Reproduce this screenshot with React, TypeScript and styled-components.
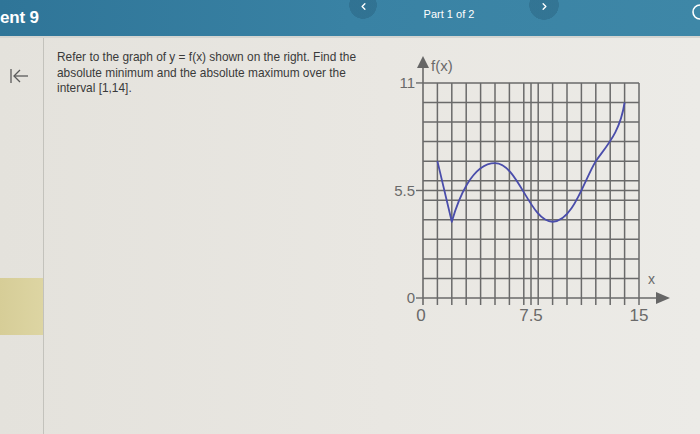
import React from "react";
import styled, { createGlobalStyle } from "styled-components";
import { ChevronLeft, ChevronRight } from "lucide-react";

const GlobalStyle = createGlobalStyle`
  html, body {
    margin: 0;
    padding: 0;
    width: 700px;
    height: 434px;
    overflow: hidden;
    background: #e7e5e0;
    font-family: "Liberation Sans", Arial, sans-serif;
  }
`;

const Page = styled.div`
  width: 700px;
  height: 434px;
  display: flex;
  flex-direction: column;
  overflow: hidden;
  background: linear-gradient(90deg, #e4e2dc 0%, #e9e7e2 55%, #ecebe7 100%);
`;

const HeaderBar = styled.header`
  height: 36px;
  flex: none;
  display: flex;
  align-items: flex-start;
  overflow: hidden;
  background: linear-gradient(90deg, #2f7598 0%, #3982a4 50%, #3e87a7 100%);
  border-bottom: 2px solid #d4d5d1;
  color: #ffffff;
`;

const CourseTitle = styled.div`
  width: 349px;
  flex: none;
  padding-top: 8px;
  font-size: 17px;
  font-weight: 700;
  letter-spacing: -0.2px;
`;

const Nav = styled.nav`
  display: flex;
  align-items: flex-start;
  flex: none;
`;

// the round buttons sit partly above the top edge, so only their lower part is drawn
const NavButton = styled.div<{ $size: number }>`
  width: ${(p) => p.$size}px;
  height: 20px;
  background: radial-gradient(
    circle ${(p) => p.$size / 2}px at 50% 5px,
    rgba(20, 60, 85, 0.22) 97%,
    transparent 100%
  );
  display: flex;
  justify-content: center;
  padding-top: 1px;
  box-sizing: border-box;
  color: #ffffff;
`;

const PartBlock = styled.div`
  width: 152px;
  padding-top: 8px;
  text-align: center;
  font-size: 11px;
  padding-right: 8px;
  box-sizing: border-box;
`;

const HeaderRight = styled.div`
  flex: 1;
  display: flex;
  justify-content: flex-end;
  padding-top: 2px;
`;

const Body = styled.div`
  flex: 1;
  display: flex;
`;

const Sidebar = styled.aside`
  width: 43px;
  flex: none;
  display: flex;
  flex-direction: column;
  border-right: 1px solid #c3c2bc;
  padding-top: 30px;
  box-sizing: content-box;
`;

const BackIcon = styled.svg`
  margin-left: 9px;
  flex: none;
`;

const FlagBlock = styled.div`
  margin-top: 194px;
  height: 57px;
  background: linear-gradient(90deg, #d6cd97, #ddd5a3);
`;

const Content = styled.main`
  flex: 1;
  display: flex;
  padding: 12px 0 0 13px;
  align-items: flex-start;
`;

const Question = styled.p`
  width: 306px;
  margin: 0;
  font-size: 11.9px;
  line-height: 15.5px;
  color: #3a3a3a;
`;

const GraphBox = styled.div`
  margin-left: 17px;
`;

const Graph = () => {
  const ox = 43;
  const oy = 248;
  const ux = 14.4;
  const uy = 19.55;
  const px = (x: number) => ox + ux * x;
  const py = (y: number) => oy - uy * y;
  const vLines = [...Array.from({ length: 15 }, (_, i) => i + 1), 7.5];
  const hLines = [...Array.from({ length: 11 }, (_, i) => i + 1), 5.5];
  const grid = "#6a6a6a";
  return (
    <svg width="300" height="290" viewBox="0 0 300 290">
      {vLines.map((x) => (
        <line key={"v" + x} x1={px(x)} x2={px(x)} y1={py(11)} y2={oy + 7} stroke={grid} strokeWidth={1.5} />
      ))}
      {hLines.map((y) => (
        <line key={"h" + y} x1={ox} x2={px(15)} y1={py(y)} y2={py(y)} stroke={grid} strokeWidth={1.5} />
      ))}
      {[0, 5.5, 11].map((y) => (
        <line key={"t" + y} x1={ox - 7} x2={ox} y1={py(y)} y2={py(y)} stroke={grid} strokeWidth={1.4} />
      ))}
      <line x1={ox} x2={ox} y1={oy + 7} y2={14} stroke={grid} strokeWidth={1.6} />
      <polygon points={`${ox - 6},18 ${ox},6 ${ox + 6},18`} fill="#666" />
      <line x1={ox} x2={280} y1={oy} y2={oy} stroke={grid} strokeWidth={1.6} />
      <polygon points={`276,242 290,248 276,254`} fill="#666" />
      <g fill="#6a6a6a" fontFamily="Liberation Sans, Arial, sans-serif">
        <text x={ox - 8} y={py(11) + 5} fontSize="15" textAnchor="end">11</text>
        <text x={ox - 8} y={py(5.5) + 6} fontSize="15" textAnchor="end">5.5</text>
        <text x={ox - 8} y={oy + 5} fontSize="15" textAnchor="end">0</text>
        <text x={px(0) - 2} y={oy + 23} fontSize="17" textAnchor="middle">0</text>
        <text x={px(7.5)} y={oy + 23} fontSize="17" textAnchor="middle">7.5</text>
        <text x={px(15)} y={oy + 23} fontSize="17" textAnchor="middle">15</text>
        <text x={ox + 8} y={21} fontSize="15">f(x)</text>
        <text x={268} y={234} fontSize="14">x</text>
      </g>
      <path
        d={`M${px(1)},${py(7)} L${px(2)},${py(3.9)}
          C78,150 92,${py(6.9)} ${px(5)},${py(6.9)}
          C138,${py(6.9)} 150,${py(3.9)} ${px(9)},${py(3.9)}
          C193,${py(3.9)} 205,128 ${px(12)},${py(7)}
          C228,94 240,82 ${px(14)},${py(10)}`}
        fill="none"
        stroke="#4a4dab"
        strokeWidth={1.8}
        strokeLinejoin="round"
      />
    </svg>
  );
};

export default function App() {
  return (
    <>
      <GlobalStyle />
      <Page>
        <HeaderBar>
          <CourseTitle>ent 9</CourseTitle>
          <Nav>
            <NavButton $size={28}>
              <ChevronLeft size={11} strokeWidth={3} />
            </NavButton>
            <PartBlock>Part 1 of 2</PartBlock>
            <NavButton $size={30}>
              <ChevronRight size={11} strokeWidth={3} />
            </NavButton>
          </Nav>
          <HeaderRight>
            <svg width="8" height="20" viewBox="0 0 8 20">
              <path d="M8,3 A7,7 0 0 0 8,17" fill="none" stroke="#ffffff" strokeWidth={1.6} />
            </svg>
          </HeaderRight>
        </HeaderBar>
        <Body>
          <Sidebar>
            <BackIcon width="20" height="16" viewBox="0 0 20 16">
              <line x1="2" y1="1" x2="2" y2="15" stroke="#5a5a5a" strokeWidth={1.3} />
              <line x1="5" y1="8" x2="19" y2="8" stroke="#5a5a5a" strokeWidth={1.3} />
              <polyline points="11,2 5,8 11,14" fill="none" stroke="#5a5a5a" strokeWidth={1.3} />
            </BackIcon>
            <FlagBlock />
          </Sidebar>
          <Content>
            <Question>
              Refer to the graph of y = f(x) shown on the right. Find the absolute minimum and the
              absolute maximum over the interval [1,14].
            </Question>
            <GraphBox>
              <Graph />
            </GraphBox>
          </Content>
        </Body>
      </Page>
    </>
  );
}
